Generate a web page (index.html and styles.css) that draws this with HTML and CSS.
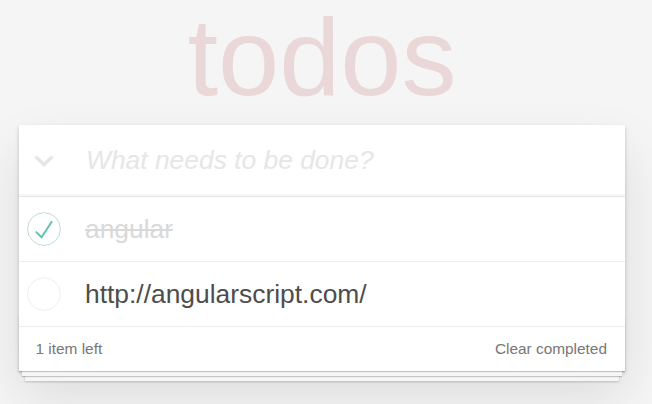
FILE: index.html
```html
<!DOCTYPE html>
<html lang="en">
<head>
<meta charset="utf-8">
<title>AngularJS • TodoMVC</title>
<link rel="stylesheet" href="styles.css">
</head>
<body>
<section class="todoapp">
  <header class="header">
    <h1 class="title">todos</h1>
  </header>
  <div class="panel">
    <div class="new-todo">
      <svg class="toggle-all" width="20" height="12" viewBox="0 0 20 12" aria-hidden="true">
        <polyline points="1.5,1.6 10,9.6 18.5,1.6" fill="none" stroke="#e6e6e6" stroke-width="3.4"/>
      </svg>
      <span class="placeholder">What needs to be done?</span>
    </div>
    <ul class="todo-list">
      <li class="todo completed">
        <svg class="toggle" width="34" height="34" viewBox="-2 -2 104 104" aria-hidden="true">
          <circle cx="50" cy="50" r="50" fill="none" stroke="#bddad5" stroke-width="3"/>
          <path fill="#5dc2af" d="M72 25L42 71 27 56l-4 4 20 20 34-52z"/>
        </svg>
        <label class="todo-label">angular</label>
      </li>
      <li class="todo">
        <svg class="toggle" width="34" height="34" viewBox="-2 -2 104 104" aria-hidden="true">
          <circle cx="50" cy="50" r="50" fill="none" stroke="#ededed" stroke-width="3"/>
        </svg>
        <label class="todo-label">http://angularscript.com/</label>
      </li>
    </ul>
    <footer class="footer">
      <span class="todo-count"><strong>1</strong> item left</span>
      <button class="clear-completed">Clear completed</button>
    </footer>
  </div>
</section>
</body>
</html>
```

FILE: styles.css
```css
html, body {
  margin: 0;
  padding: 0;
}

body {
  min-height: 404px;
  background: #f5f5f5;
  color: #4d4d4d;
  font-family: "Liberation Sans", Helvetica, Arial, sans-serif;
  font-size: 15.4px;
  line-height: 1.4;
}

.todoapp {
  width: 606px;
  margin: 0 0 44px 19px;
}

.title {
  margin: 0 0 13px;
  padding-top: 2px;
  font-size: 110px;
  line-height: 110px;
  font-weight: normal;
  text-align: center;
  color: rgba(175, 47, 47, 0.15);
}

.panel {
  position: relative;
  background: #fff;
  box-shadow: 0 2px 4px 0 rgba(0, 0, 0, 0.2),
              0 25px 50px 0 rgba(0, 0, 0, 0.1);
}

.new-todo {
  display: flex;
  align-items: center;
  height: 71px;
  padding-left: 15px;
  box-shadow: inset 0 -2px 1px rgba(0, 0, 0, 0.03);
}

.toggle-all {
  display: block;
  flex: none;
}

.placeholder {
  margin-left: 32px;
  font-size: 26.4px;
  line-height: 1.4;
  font-style: italic;
  color: #e6e6e6;
}

.todo-list {
  margin: 0;
  padding: 0;
  list-style: none;
  border-top: 1px solid #e6e6e6;
}

.todo {
  display: flex;
  align-items: center;
  border-bottom: 1px solid #ededed;
}

.toggle {
  display: block;
  flex: none;
  margin-left: 8px;
}

.todo-label {
  display: block;
  padding: 16px 66px 16px 24px;
  font-size: 26.4px;
  line-height: 32px;
  color: #4d4d4d;
}

.todo.completed .todo-label {
  color: #d9d9d9;
  text-decoration: line-through;
}

.footer {
  position: relative;
  display: flex;
  justify-content: space-between;
  align-items: center;
  height: 22px;
  padding: 11px 18px 11px 16.5px;
  color: #777;
  line-height: 22px;
}

.footer::before {
  content: '';
  position: absolute;
  right: 0;
  bottom: 0;
  left: 0;
  height: 55px;
  overflow: hidden;
  box-shadow: 0 1px 1px rgba(0, 0, 0, 0.2),
              0 8px 0 -3px #f6f6f6,
              0 9px 1px -3px rgba(0, 0, 0, 0.2),
              0 16px 0 -6px #f6f6f6,
              0 17px 2px -6px rgba(0, 0, 0, 0.2);
}

.todo-count strong {
  font-weight: normal;
}

.clear-completed {
  margin: 0;
  padding: 0;
  border: 0;
  background: none;
  font: inherit;
  line-height: 22px;
  color: inherit;
  cursor: pointer;
}
```
